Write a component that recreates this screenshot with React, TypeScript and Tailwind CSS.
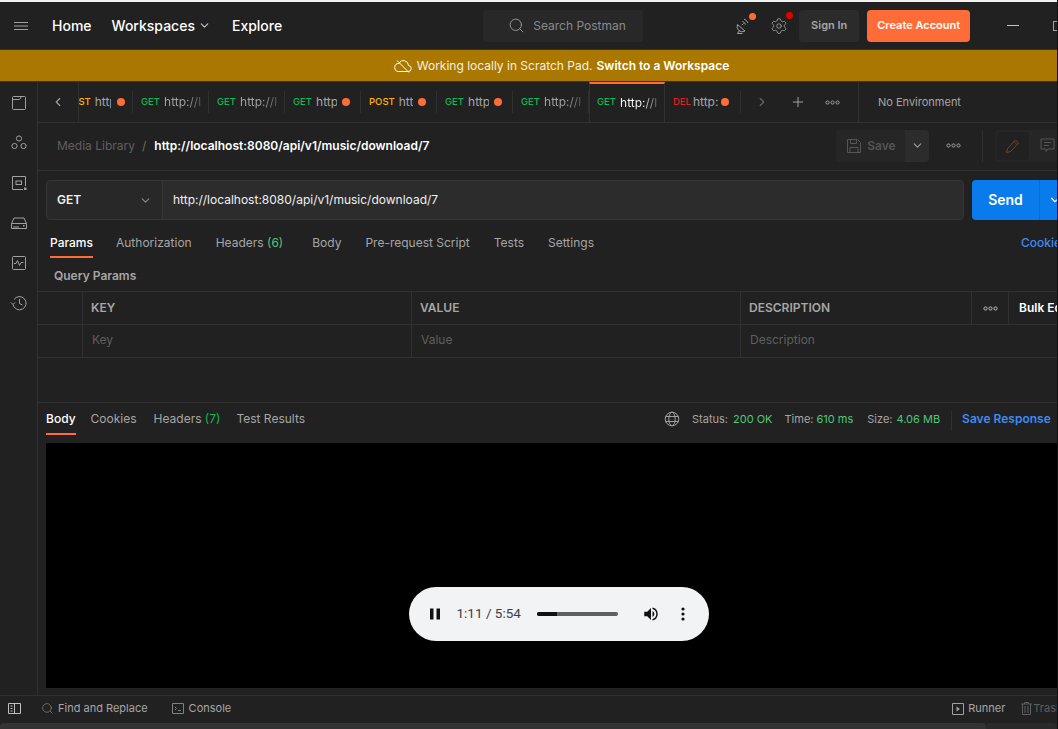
import React from "react"
import { ChevronDown, ChevronLeft, ChevronRight, Plus, Search, Settings } from "lucide-react"

const tabs = [
  { method: "GET", color: "text-[#0cbb52]", url: "http://l", dot: false },
  { method: "GET", color: "text-[#0cbb52]", url: "http://l", dot: false },
  { method: "GET", color: "text-[#0cbb52]", url: "http", dot: true },
  { method: "POST", color: "text-[#ffb400]", url: "http", dot: true },
  { method: "GET", color: "text-[#0cbb52]", url: "http", dot: true },
  { method: "GET", color: "text-[#0cbb52]", url: "http://l", dot: false },
]

function Dots({ className = "" }: { className?: string }) {
  return (
    <svg width="15" height="5" viewBox="0 0 15 5" fill="none" stroke="currentColor" className={className}>
      <circle cx="2.5" cy="2.5" r="1.6" />
      <circle cx="7.5" cy="2.5" r="1.6" />
      <circle cx="12.5" cy="2.5" r="1.6" />
    </svg>
  )
}

function Tab({ method, color, url, dot, active }: { method: string; color: string; url: string; dot: boolean; active?: boolean }) {
  const urlColor = active
    ? "from-white from-60% to-[#555] bg-gradient-to-r bg-clip-text text-transparent"
    : dot
      ? "text-[#a6a6a6]"
      : "from-[#a6a6a6] from-60% to-[#505050] bg-gradient-to-r bg-clip-text text-transparent"
  return (
    <div
      className={`flex h-full w-[76px] shrink-0 items-center ${
        active ? "border-t-2 border-r border-l border-t-[#ff6c37] border-r-[#303030] border-l-[#303030] pb-px" : ""
      }`}
    >
      <div
        className={`flex h-[22px] w-full items-center ${dot ? "pr-[10px]" : "pr-[6px]"} ${
          active ? "pl-[7px]" : "border-r border-[#303030] pl-2"
        }`}
      >
        <span className={`shrink-0 text-[9.5px] font-medium ${color}`}>{method}</span>
        <span className={`ml-[4px] min-w-0 flex-1 overflow-hidden text-xs whitespace-nowrap ${urlColor}`}>{url}</span>
        {dot && <span className="ml-[5px] h-2 w-2 shrink-0 rounded-full bg-[#ff6c37]" />}
      </div>
    </div>
  )
}

function SideIcon({ children, mt }: { children: React.ReactNode; mt: string }) {
  return (
    <svg width="18" height="18" viewBox="0 0 18 18" fill="none" stroke="#a0a0a0" strokeWidth="1" className={`shrink-0 ${mt}`}>
      {children}
    </svg>
  )
}

function Sidebar() {
  return (
    <aside className="flex w-[38px] shrink-0 flex-col items-center border-r border-[#303030] pt-[12px]">
      <SideIcon mt="">
        <rect x="2.5" y="2.5" width="13" height="13" rx="1" />
        <path d="M2.5 5.5h7l2-3" />
      </SideIcon>
      <SideIcon mt="mt-[22px]">
        <circle cx="9" cy="4.5" r="2.6" />
        <circle cx="4.5" cy="12" r="2.6" />
        <circle cx="13.5" cy="12" r="2.6" />
      </SideIcon>
      <SideIcon mt="mt-[22px]">
        <path d="M15.5 12V2.5h-13v13H13" />
        <rect x="6" y="7" width="5.5" height="3.5" />
        <rect x="14" y="13.5" width="2.5" height="2.5" fill="#a0a0a0" stroke="none" />
      </SideIcon>
      <SideIcon mt="mt-[22px]">
        <path d="M1.5 9.5 4 4h10l2.5 5.5v5h-15zM1.5 9.5h15" />
        <path d="M4 14v-2M6 14v-2M8 14v-2" />
        <rect x="13" y="11" width="1.5" height="1.5" fill="#a0a0a0" stroke="none" />
      </SideIcon>
      <SideIcon mt="mt-[22px]">
        <rect x="2.5" y="2.5" width="13" height="13" rx="1" />
        <path d="M4 9.5h2l1.5-3 2 5 1.5-3h2.5" />
      </SideIcon>
      <SideIcon mt="mt-[22px]">
        <path d="M3 10.5a6.6 6.6 0 1 0 1-5" />
        <path d="m1 8.5 2 2 2-2M9.5 5v4.5l3 1.5" />
      </SideIcon>
    </aside>
  )
}

export default function App() {
  return (
    <div className="flex h-[729px] w-[1058px] overflow-hidden bg-[#111] font-['Inter',sans-serif] text-xs text-[#a6a6a6]">
      <div className="flex h-full w-[1057px] shrink-0 flex-col overflow-hidden bg-[#212121]">
        <div className="h-[2px] shrink-0 bg-[#f0f0f0]" />

        {/* top bar */}
        <header className="flex h-[48px] shrink-0 items-center border-b border-[#333] whitespace-nowrap">
          <svg width="14" height="10" viewBox="0 0 14 10" stroke="#a0a0a0" className="ml-[14px] shrink-0">
            <path d="M0 1.5h14M0 5h14M0 8.5h14" />
          </svg>
          <span className="ml-[24px] shrink-0 text-sm font-medium text-white">Home</span>
          <span className="ml-[20px] shrink-0 text-sm font-medium text-white">Workspaces</span>
          <ChevronDown size={13} className="ml-[3px] shrink-0 text-[#c8c8c8]" />
          <span className="ml-[21px] shrink-0 text-sm font-medium text-white">Explore</span>
          <div className="ml-[201px] flex h-[32px] w-[160px] shrink-0 items-center rounded bg-[#282828] pl-[25px]">
            <Search size={17} strokeWidth={1.25} className="shrink-0 text-[#a0a0a0]" />
            <span className="ml-[8px] text-[#8a8a8a]">Search Postman</span>
          </div>
          <div className="relative ml-[92px] h-[20px] w-[20px] shrink-0">
            <svg width="20" height="20" viewBox="0 0 20 20" fill="none" stroke="#a0a0a0">
              <path d="M2.5 8.5a5.2 5.2 0 0 0 7.5 6.5zM4.5 14.5 2.5 17.5h5M7 9l1.5-1.5M7.5 5.5a4.5 4.5 0 0 1 3 3M9 3a7 7 0 0 1 4 4" />
            </svg>
            <span className="absolute top-[-3px] right-[-1px] h-[7px] w-[7px] rounded-full bg-[#ff6c37]" />
          </div>
          <div className="relative ml-[15px] h-[18px] w-[18px] shrink-0">
            <Settings size={18} strokeWidth={1} className="text-[#b0b0b0]" />
            <span className="absolute top-[-5px] right-[-5px] h-[7px] w-[7px] rounded-full bg-[#e00000]" />
          </div>
          <div className="ml-[11px] flex h-[32px] w-[60px] shrink-0 items-center justify-center rounded bg-[#2b2b2b] text-[11px] font-semibold text-[#a6a6a6]">
            Sign In
          </div>
          <div className="ml-[8px] flex h-[32px] w-[103px] shrink-0 items-center justify-center rounded bg-[#ff6c37] text-[11px] font-semibold text-white">
            Create Account
          </div>
          <div className="ml-[37px] h-px w-[12px] shrink-0 bg-[#c0c0c0]" />
          <div className="ml-[34px] h-[10px] w-[10px] shrink-0 border border-[#a0a0a0]" />
        </header>

        {/* scratch pad banner */}
        <div className="flex h-[32px] shrink-0 items-center justify-center border-b border-[#333] bg-[#aa7700] pl-[66px] text-white">
          <svg width="18" height="14" viewBox="0 0 18 14" fill="none" stroke="#fff" className="mr-[5px] shrink-0">
            <path d="M4.5 12.5h9.5a3 3 0 0 0 .5-6A5 5 0 0 0 5 4.5a4 4 0 0 0-.5 8zM3 1.5l12 12" />
          </svg>
          <span className="text-[#f5f0e0]">Working locally in Scratch Pad.</span>
          <span className="ml-1 font-semibold">Switch to a Workspace</span>
        </div>

        <div className="flex min-h-0 flex-1">
          <Sidebar />
          <main className="flex min-w-0 flex-1 flex-col">
            {/* request tabs */}
            <div className="flex h-[41px] shrink-0 items-center border-b border-[#303030] whitespace-nowrap">
              <div className="flex h-full w-[41px] shrink-0 items-center justify-center border-r border-[#303030]">
                <ChevronLeft size={14} className="text-[#a0a0a0]" />
              </div>
              <div className="flex h-[22px] w-[54px] shrink-0 items-center overflow-hidden border-r border-[#303030]">
                <span className="ml-[-14px] shrink-0 text-[9.5px] font-medium text-[#ffb400]">POST</span>
                <span className="ml-[4px] w-[16px] shrink-0 overflow-hidden text-[#a6a6a6]">http</span>
                <span className="ml-[6px] h-2 w-2 shrink-0 rounded-full bg-[#ff6c37]" />
              </div>
              {tabs.map((t, i) => (
                <Tab key={i} {...t} />
              ))}
              <Tab method="GET" color="text-[#0cbb52]" url="http://l" dot={false} active />
              <div className="flex h-[22px] w-[76px] shrink-0 items-center border-r border-[#303030] pr-[11px] pl-2">
                <span className="shrink-0 text-[9.5px] font-medium text-[#e02020]">DEL</span>
                <span className="ml-[2px] min-w-0 flex-1 overflow-hidden text-[#a6a6a6]">http:</span>
                <span className="ml-[2px] h-2 w-2 shrink-0 rounded-full bg-[#ff6c37]" />
              </div>
              <ChevronRight size={14} className="ml-[14px] shrink-0 text-[#6b6b6b]" />
              <Plus size={16} strokeWidth={1.5} className="ml-[21px] shrink-0 text-[#a0a0a0]" />
              <Dots className="ml-[19px] shrink-0 text-[#a0a0a0]" />
              <div className="ml-[18px] h-full w-px shrink-0 bg-[#303030]" />
              <span className="ml-[19px] shrink-0 text-[11px] text-[#a6a6a6]">No Environment</span>
            </div>

            {/* breadcrumb */}
            <div className="flex h-[48px] shrink-0 items-center border-b border-[#303030] pb-[2px] pl-[19px] whitespace-nowrap">
              <span className="shrink-0 text-[#5f5f5f]">Media Library</span>
              <span className="ml-[7px] shrink-0 text-[#6b6b6b]">/</span>
              <span className="ml-[8px] shrink-0 font-semibold text-white">http://localhost:8080/api/v1/music/download/7</span>
              <div className="ml-[407px] flex h-[32px] w-[93px] shrink-0 overflow-hidden rounded">
                <div className="flex w-[69px] items-center justify-center bg-[#262626] text-[#555]">
                  <svg width="16" height="16" viewBox="0 0 16 16" fill="none" stroke="#555" className="mr-[5px] shrink-0">
                    <path d="M1.5 1.5h10l3 3v10h-13zM4.5 1.5v4h6v-4M4 14.5v-5h8v5" />
                  </svg>
                  <span className="font-semibold">Save</span>
                </div>
                <div className="flex flex-1 items-center justify-center bg-[#2c2c2c]">
                  <ChevronDown size={13} className="text-[#a0a0a0]" />
                </div>
              </div>
              <Dots className="ml-[17px] shrink-0 text-[#a0a0a0]" />
              <div className="ml-[21px] h-[32px] w-px shrink-0 bg-[#303030]" />
              <div className="ml-[12px] flex h-[32px] w-[70px] shrink-0 items-center gap-[11px] rounded bg-[#262626] pl-[2px]">
                <div className="flex h-[28px] w-[32px] shrink-0 items-center justify-center rounded bg-[#212121]">
                  <svg width="16" height="16" viewBox="0 0 16 16" fill="none" stroke="#7a3d25" className="shrink-0">
                    <path d="M1.5 14.5l1-4 8-8.5 3 3-8 8.5zM9 3.5l3 3" />
                  </svg>
                </div>
                <svg width="15" height="15" viewBox="0 0 15 15" fill="none" stroke="#555" className="shrink-0">
                  <path d="M1 1h13v10H8l-2 2.5V11H1zM4 4.5h7M4 7.5h5" />
                </svg>
              </div>
            </div>

            {/* url bar */}
            <div className="flex h-[49px] shrink-0 items-end pl-[8px]">
              <div className="flex h-[40px] w-[918px] shrink-0 rounded border border-[#363636] bg-[#2c2c2c]">
                <div className="flex w-[116px] shrink-0 items-center rounded-l border-r border-[#363636] bg-[#282828] pl-[10px]">
                  <span className="font-semibold text-[#f0f0f0]">GET</span>
                  <ChevronDown size={13} className="ml-[58px] shrink-0 text-[#8a8a8a]" />
                </div>
                <span className="ml-[10px] self-center text-[#f0f0f0]">http://localhost:8080/api/v1/music/download/7</span>
              </div>
              <div className="ml-[8px] flex h-[40px] w-[100px] shrink-0 rounded bg-[#097bed] text-white">
                <div className="flex w-[68px] shrink-0 items-center justify-center border-r border-[#0a6cd0] text-sm font-semibold">
                  Send
                </div>
                <ChevronDown size={14} className="ml-[8px] shrink-0 self-center" />
              </div>
            </div>

            {/* request section tabs */}
            <div className="mt-[15px] flex h-[24px] shrink-0 items-start pl-[12px] whitespace-nowrap text-[#a6a6a6]">
              <span className="shrink-0 border-b-2 border-[#ff6c37] pb-[5px] font-medium text-white">Params</span>
              <span className="ml-[23px] shrink-0">Authorization</span>
              <span className="ml-[24px] shrink-0">
                Headers <span className="text-[#4dc77a]">(6)</span>
              </span>
              <span className="ml-[29px] shrink-0">Body</span>
              <span className="ml-[24px] shrink-0">Pre-request Script</span>
              <span className="ml-[24px] shrink-0">Tests</span>
              <span className="ml-[24px] shrink-0">Settings</span>
              <span className="ml-[427px] shrink-0 font-medium text-[#3e8bf5]">Cookies</span>
            </div>

            <div className="flex h-[32px] shrink-0 items-center pt-px pl-[16px] font-semibold text-[#a6a6a6]">Query Params</div>

            {/* params table */}
            <div className="grid w-[1060px] shrink-0 grid-cols-[45px_329px_329px_231px_37px_89px] border-t border-[#303030] whitespace-nowrap">
              <div className="h-[33px] border-r border-b border-[#303030]" />
              <div className="flex h-[33px] items-center border-r border-b border-[#303030] pl-2 font-semibold">KEY</div>
              <div className="flex h-[33px] items-center border-r border-b border-[#303030] pl-2 font-semibold">VALUE</div>
              <div className="flex h-[33px] items-center border-r border-b border-[#303030] pl-2 font-semibold">DESCRIPTION</div>
              <div className="flex h-[33px] items-center justify-center border-r border-b border-[#303030]">
                <Dots className="text-[#c0c0c0]" />
              </div>
              <div className="flex h-[33px] items-center overflow-hidden border-b border-[#303030] pl-[10px] font-semibold text-white">
                Bulk Edit
              </div>
              <div className="h-[33px] border-r border-b border-[#303030]" />
              <div className="flex h-[33px] items-center border-r border-b border-[#303030] pb-[2px] pl-[9px] text-[#5f5f5f]">Key</div>
              <div className="flex h-[33px] items-center border-r border-b border-[#303030] pb-[2px] pl-[9px] text-[#5f5f5f]">Value</div>
              <div className="col-span-3 flex h-[33px] items-center border-b border-[#303030] pb-[2px] pl-[9px] text-[#5f5f5f]">Description</div>
            </div>

            <div className="h-[45px] shrink-0 border-b border-[#303030]" />

            {/* response bar */}
            <div className="flex h-[40px] shrink-0 items-start pt-[8px] pl-[8px] whitespace-nowrap">
              <span className="shrink-0 border-b-2 border-[#ff6c37] pb-[6px] font-medium text-white">Body</span>
              <span className="ml-[15px] shrink-0">Cookies</span>
              <span className="ml-[17px] shrink-0">
                Headers <span className="text-[#0cbb52]">(7)</span>
              </span>
              <span className="ml-[16px] shrink-0">Test Results</span>
              <svg width="16" height="16" viewBox="0 0 16 16" fill="none" stroke="#a0a0a0" className="ml-[359px] shrink-0">
                <circle cx="8" cy="8" r="6.8" />
                <ellipse cx="8" cy="8" rx="3.2" ry="6.8" />
                <path d="M1.5 5.5h13M1.5 10.5h13" />
              </svg>
              <span className="ml-[12px] flex shrink-0 items-center text-[11px] leading-[16px]">
                Status:
                <span className="ml-[5px] text-[#4dc77a]">200 OK</span>
                <span className="ml-[12px]">Time:</span>
                <span className="ml-[3px] text-[#4dc77a]">610 ms</span>
                <span className="ml-[14px]">Size:</span>
                <span className="ml-[4px] text-[#4dc77a]">4.06 MB</span>
              </span>
              <div className="ml-[11px] h-[20px] w-px shrink-0 bg-[#303030]" />
              <span className="ml-[10px] shrink-0 font-semibold text-[#3e8bf5]">Save Response</span>
            </div>

            {/* audio preview */}
            <div className="ml-[8px] flex h-[245px] shrink-0 items-end justify-center bg-black pb-[47px] pl-[14px]">
              <div className="flex h-[54px] w-[300px] shrink-0 items-center rounded-full bg-[#f1f3f4] font-['Roboto',sans-serif] text-[13.5px] text-[#3c4043]">
                <svg width="12" height="12" viewBox="0 0 12 12" className="ml-[20px] shrink-0" fill="#111">
                  <rect x="1" y="0.5" width="3.5" height="11" />
                  <rect x="7.5" y="0.5" width="3.5" height="11" />
                </svg>
                <span className="ml-[16px] whitespace-nowrap">1:11 / 5:54</span>
                <div className="ml-[16px] h-[4px] w-[81px] shrink-0 overflow-hidden rounded-full bg-[#5f6060]">
                  <div className="h-full w-[20px] bg-[#111]" />
                </div>
                <svg width="18" height="18" viewBox="0 0 24 24" fill="#111" className="ml-[24px] shrink-0">
                  <path d="M3 9v6h4l5 5V4L7 9H3zm13.5 3A4.5 4.5 0 0 0 14 7.97v8.05A4.5 4.5 0 0 0 16.5 12zM14 3.23v2.06a7 7 0 0 1 0 13.42v2.06a9 9 0 0 0 0-17.54z" />
                </svg>
                <svg width="4" height="14" viewBox="0 0 4 14" fill="#111" className="ml-[21px] shrink-0">
                  <circle cx="2" cy="2" r="1.6" />
                  <circle cx="2" cy="7" r="1.6" />
                  <circle cx="2" cy="12" r="1.6" />
                </svg>
              </div>
            </div>
            <div className="h-[7px] shrink-0" />
          </main>
        </div>

        {/* status bar */}
        <footer className="flex h-[28px] shrink-0 items-center border-t border-[#303030] pb-[2px] text-[11px] whitespace-nowrap">
          <svg width="13" height="11" viewBox="0 0 13 11" fill="none" stroke="#c0c0c0" className="ml-[8px] shrink-0">
            <path d="M.5.5h12v10H.5zM6.5.5v10M2.5 3h2M2.5 5.5h2M2.5 8h2" />
          </svg>
          <Search size={13} strokeWidth={1} className="ml-[20px] shrink-0 text-[#a0a0a0]" />
          <span className="ml-[4px] shrink-0">Find and Replace</span>
          <svg width="12" height="11" viewBox="0 0 12 11" fill="none" stroke="#808080" className="ml-[24px] shrink-0">
            <path d="M.5.5h11v10H.5zM3 4l1.5 1.5L3 7M6 7.5h3" />
          </svg>
          <span className="ml-[5px] shrink-0">Console</span>
          <svg width="12" height="12" viewBox="0 0 12 12" fill="none" stroke="#a0a0a0" className="ml-[721px] shrink-0">
            <path d="M.5.5h11v11H.5z" />
            <path d="M4.5 3.5v5l3.5-2.5z" fill="#a0a0a0" stroke="none" />
          </svg>
          <span className="ml-[4px] shrink-0">Runner</span>
          <svg width="11" height="13" viewBox="0 0 11 13" fill="none" stroke="#5f5f5f" className="ml-[16px] shrink-0">
            <path d="M0 2h11M3.5 2V.5h4V2M1.5 2v10.5h8V2M4 4v7M7 4v7" />
          </svg>
          <span className="ml-[1px] shrink-0 text-[#5f5f5f]">Trash</span>
        </footer>

        {/* window scrollbar */}
        <div className="flex h-[6px] shrink-0 items-start bg-[#212121]">
          <div className="h-full w-[986px] shrink-0 rounded-t bg-[#333]" />
          <div className="h-full flex-1 rounded-t bg-[#2a2a2a]" />
        </div>
      </div>
    </div>
  )
}
